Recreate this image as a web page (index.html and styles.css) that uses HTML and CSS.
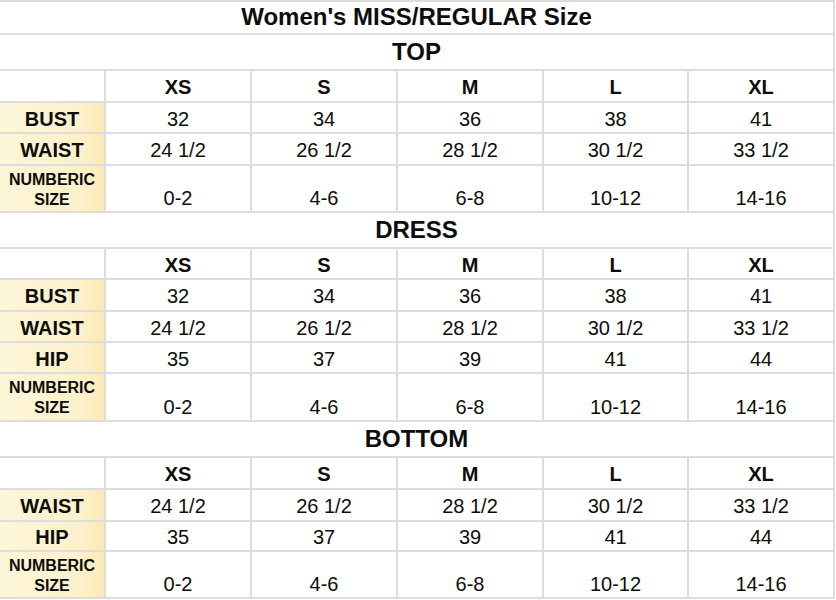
FILE: index.html
```html
<!DOCTYPE html>
<html>
<head>
<meta charset="utf-8">
<link rel="stylesheet" href="styles.css">
</head>
<body>
<div class="chart">
  <div class="full title">Women's MISS/REGULAR Size</div>

  <div class="full section">TOP</div>
  <div class="blank"></div><div class="head">XS</div><div class="head">S</div><div class="head">M</div><div class="head">L</div><div class="head">XL</div>
  <div class="label">BUST</div><div class="val">32</div><div class="val">34</div><div class="val">36</div><div class="val">38</div><div class="val">41</div>
  <div class="label">WAIST</div><div class="val">24 1/2</div><div class="val">26 1/2</div><div class="val">28 1/2</div><div class="val">30 1/2</div><div class="val">33 1/2</div>
  <div class="label small">NUMBERIC<br>SIZE</div><div class="val low">0-2</div><div class="val low">4-6</div><div class="val low">6-8</div><div class="val low">10-12</div><div class="val low">14-16</div>

  <div class="full section">DRESS</div>
  <div class="blank"></div><div class="head">XS</div><div class="head">S</div><div class="head">M</div><div class="head">L</div><div class="head">XL</div>
  <div class="label">BUST</div><div class="val">32</div><div class="val">34</div><div class="val">36</div><div class="val">38</div><div class="val">41</div>
  <div class="label">WAIST</div><div class="val">24 1/2</div><div class="val">26 1/2</div><div class="val">28 1/2</div><div class="val">30 1/2</div><div class="val">33 1/2</div>
  <div class="label">HIP</div><div class="val">35</div><div class="val">37</div><div class="val">39</div><div class="val">41</div><div class="val">44</div>
  <div class="label small">NUMBERIC<br>SIZE</div><div class="val low">0-2</div><div class="val low">4-6</div><div class="val low">6-8</div><div class="val low">10-12</div><div class="val low">14-16</div>

  <div class="full section">BOTTOM</div>
  <div class="blank"></div><div class="head">XS</div><div class="head">S</div><div class="head">M</div><div class="head">L</div><div class="head">XL</div>
  <div class="label">WAIST</div><div class="val">24 1/2</div><div class="val">26 1/2</div><div class="val">28 1/2</div><div class="val">30 1/2</div><div class="val">33 1/2</div>
  <div class="label">HIP</div><div class="val">35</div><div class="val">37</div><div class="val">39</div><div class="val">41</div><div class="val">44</div>
  <div class="label small">NUMBERIC<br>SIZE</div><div class="val low">0-2</div><div class="val low">4-6</div><div class="val low">6-8</div><div class="val low">10-12</div><div class="val low">14-16</div>
</div>
</body>
</html>
```

FILE: styles.css
```css
html, body {
  margin: 0;
  padding: 0;
  background: #ffffff;
}

body {
  font-family: "Liberation Sans", Arial, sans-serif;
  color: #0d0d0d;
}

.chart {
  width: 835px;
  box-sizing: border-box;
  display: grid;
  grid-template-columns: 104px 144px 144px 144px 143px 144px;
  grid-template-rows: 31px 34px 30px 29px 30px 45px 34px 29px 30px 29px 29px 46px 34px 30px 30px 28px 45px;
  gap: 2px;
  padding: 2px 2px 2px 0;
  background: #dddddd;
}

.chart > div {
  background: #ffffff;
  display: flex;
  align-items: center;
  justify-content: center;
  text-align: center;
}

.full {
  grid-column: 1 / -1;
  font-weight: bold;
  font-size: 24px;
}

.title {
  padding-bottom: 1px;
}

.head {
  font-weight: bold;
  font-size: 20px;
  padding-top: 3px;
}

.label {
  font-weight: bold;
  font-size: 20px;
  padding-top: 3px;
}

.chart > .label {
  background: linear-gradient(to right, #fef6da 0%, #fdf1cb 75%, #fbe9b6 100%);
}

.chart > .label.small {
  font-size: 16px;
  line-height: 20px;
  padding-top: 2px;
}

.val {
  font-size: 20px;
  padding-top: 3px;
}

.chart > .val.low {
  align-items: flex-end;
  line-height: 20px;
  padding-bottom: 3px;
  box-sizing: border-box;
}
```
